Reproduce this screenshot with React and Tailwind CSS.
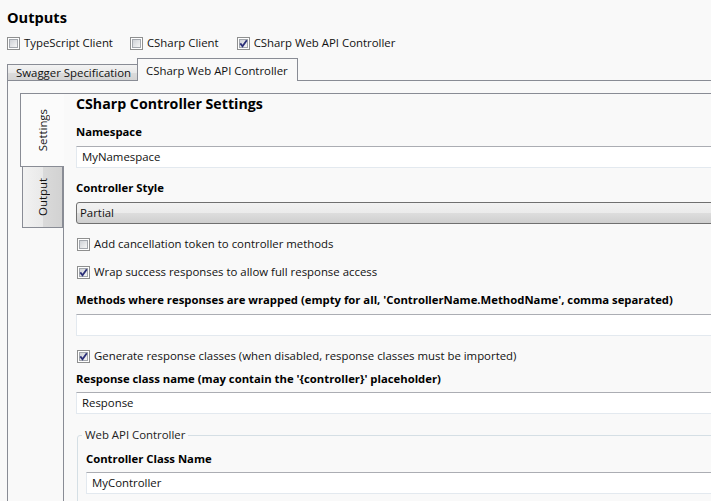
import React from 'react';

const FONT = { fontFamily: '"Segoe UI", "Open Sans", "Liberation Sans", sans-serif' };

// Win7-style checkbox
function CheckBox({ checked }) {
  return (
    <div className="w-[13px] h-[13px] shrink-0 border border-[#8e8f8f] bg-white p-px">
      <div className="relative w-full h-full border border-[#a3a7ad] bg-[linear-gradient(135deg,#cfd2d7,#f5f5f5)]">
        {checked && (
          <svg viewBox="0 0 9 9" className="absolute -left-[1px] -top-[1px] w-[9px] h-[9px]">
            <path d="M1.3 4.4 L3.5 7.3 L7.8 1.2" fill="none" stroke="#2b2f78" strokeWidth="1.8" />
          </svg>
        )}
      </div>
    </div>
  );
}

function CheckRow({ checked, label, className = '' }) {
  return (
    <div className={`flex items-center h-[20px] ${className}`}>
      <CheckBox checked={checked} />
      <span className="ml-[4px] text-[11.4px] text-[#111] whitespace-nowrap">{label}</span>
    </div>
  );
}

function Label({ children, className = '' }) {
  return (
    <div className={`h-[20px] leading-[20px] text-[11.3px] font-bold text-black whitespace-nowrap ${className}`}>
      {children}
    </div>
  );
}

function TextBox({ value, className = '' }) {
  return (
    <div
      className={`h-[22px] bg-white border border-[#e3e9ef] border-t-[#abadb3] pl-[5px] text-[11.4px] leading-[20px] text-[#111] ${className}`}
    >
      {value}
    </div>
  );
}

export default function App() {
  return (
    <div style={FONT} className="w-[711px] h-[501px] overflow-hidden bg-[#f9f9f9] flex flex-col">
      <div className="pl-[7px] pt-[7px] h-[26px] text-[14.6px] leading-[20px] font-bold text-black">Outputs</div>

      {/* output checkboxes */}
      <div className="flex items-center pl-[7px] mt-[7px]">
        <CheckRow label="TypeScript Client" />
        <CheckRow label="CSharp Client" className="ml-[17px]" />
        <CheckRow checked label="CSharp Web API Controller" className="ml-[18px]" />
      </div>

      {/* main tab strip */}
      <div className="flex items-end pl-[7px] mt-[5px] h-[22px]">
        <div className="h-[16px] w-[131px] border border-b-0 border-[#898c95] bg-[linear-gradient(#f3f3f3,#e9e9e9_50%,#dcdcdc_51%,#d4d4d4)] pl-[8px] text-[11.4px] leading-[15px] text-[#111] whitespace-nowrap">
          Swagger Specification
        </div>
        <div className="relative z-10 -ml-px -mb-px h-[23px] w-[161px] border border-b-0 border-[#898c95] bg-[#f9f9f9] pl-[8px] text-[11.4px] leading-[23px] text-[#111] whitespace-nowrap">
          CSharp Web API Controller
        </div>
      </div>

      {/* tab content */}
      <div className="flex-1 ml-[7px] border-t border-l border-[#898c95] pl-[12px] pt-[12px] flex">
        {/* vertical tabs */}
        <div className="flex flex-col w-[43px] shrink-0">
          <div className="relative z-10 -mr-px h-[74px] border border-r-0 border-[#898c95] bg-[#fbfbfb] flex items-center justify-center">
            <span className="[writing-mode:vertical-rl] rotate-180 text-[11.4px] leading-[14px] text-[#111]">Settings</span>
          </div>
          <div className="ml-[2px] -mt-px h-[62px] border border-[#898c95] bg-[linear-gradient(90deg,#f2f2f2,#e9e9e9_50%,#dadada_51%,#d2d2d2)] flex items-center justify-center">
            <span className="[writing-mode:vertical-rl] rotate-180 text-[11.4px] leading-[14px] text-[#111]">Output</span>
          </div>
        </div>

        {/* settings panel */}
        <div className="w-[720px] shrink-0 border-t border-l border-[#898c95] pl-[12px]">
          <div className="h-[20px] leading-[20px] text-[14.2px] font-bold text-black whitespace-nowrap">CSharp Controller Settings</div>

          <Label className="mt-[8px]">Namespace</Label>
          <TextBox value="MyNamespace" className="mt-[4px]" />

          <Label className="mt-[10px]">Controller Style</Label>
          <div className="mt-[4px] h-[22px] rounded-[3px] border border-[#707070] bg-[linear-gradient(#f2f2f2,#ebebeb_50%,#dddddd_51%,#cfcfcf)] pl-[3px] text-[11.4px] leading-[20px] text-[#111]">
            Partial
          </div>

          <CheckRow label="Add cancellation token to controller methods" className="mt-[10px] ml-px" />
          <CheckRow checked label="Wrap success responses to allow full response access" className="mt-[8px] ml-px" />

          <Label className="mt-[8px]">
            Methods where responses are wrapped (empty for all, 'ControllerName.MethodName', comma separated)
          </Label>
          <TextBox value="" className="mt-[4px]" />

          <CheckRow
            checked
            label="Generate response classes (when disabled, response classes must be imported)"
            className="mt-[10px] ml-px"
          />

          <Label className="mt-[3px]">Response class name (may contain the '{'{controller}'}' placeholder)</Label>
          <TextBox value="Response" className="mt-[3px]" />

          <fieldset className="mt-[11px] ml-px border border-[#d5dfe5] rounded-[3px] pl-[8px] pb-[10px]">
            <legend className="-ml-[4px] px-[3px] h-[20px] leading-[20px] text-[11.4px] text-[#222]">Web API Controller</legend>
            <Label className="mt-[4px]">Controller Class Name</Label>
            <TextBox value="MyController" className="mt-[3px]" />
          </fieldset>
        </div>
      </div>
    </div>
  );
}
